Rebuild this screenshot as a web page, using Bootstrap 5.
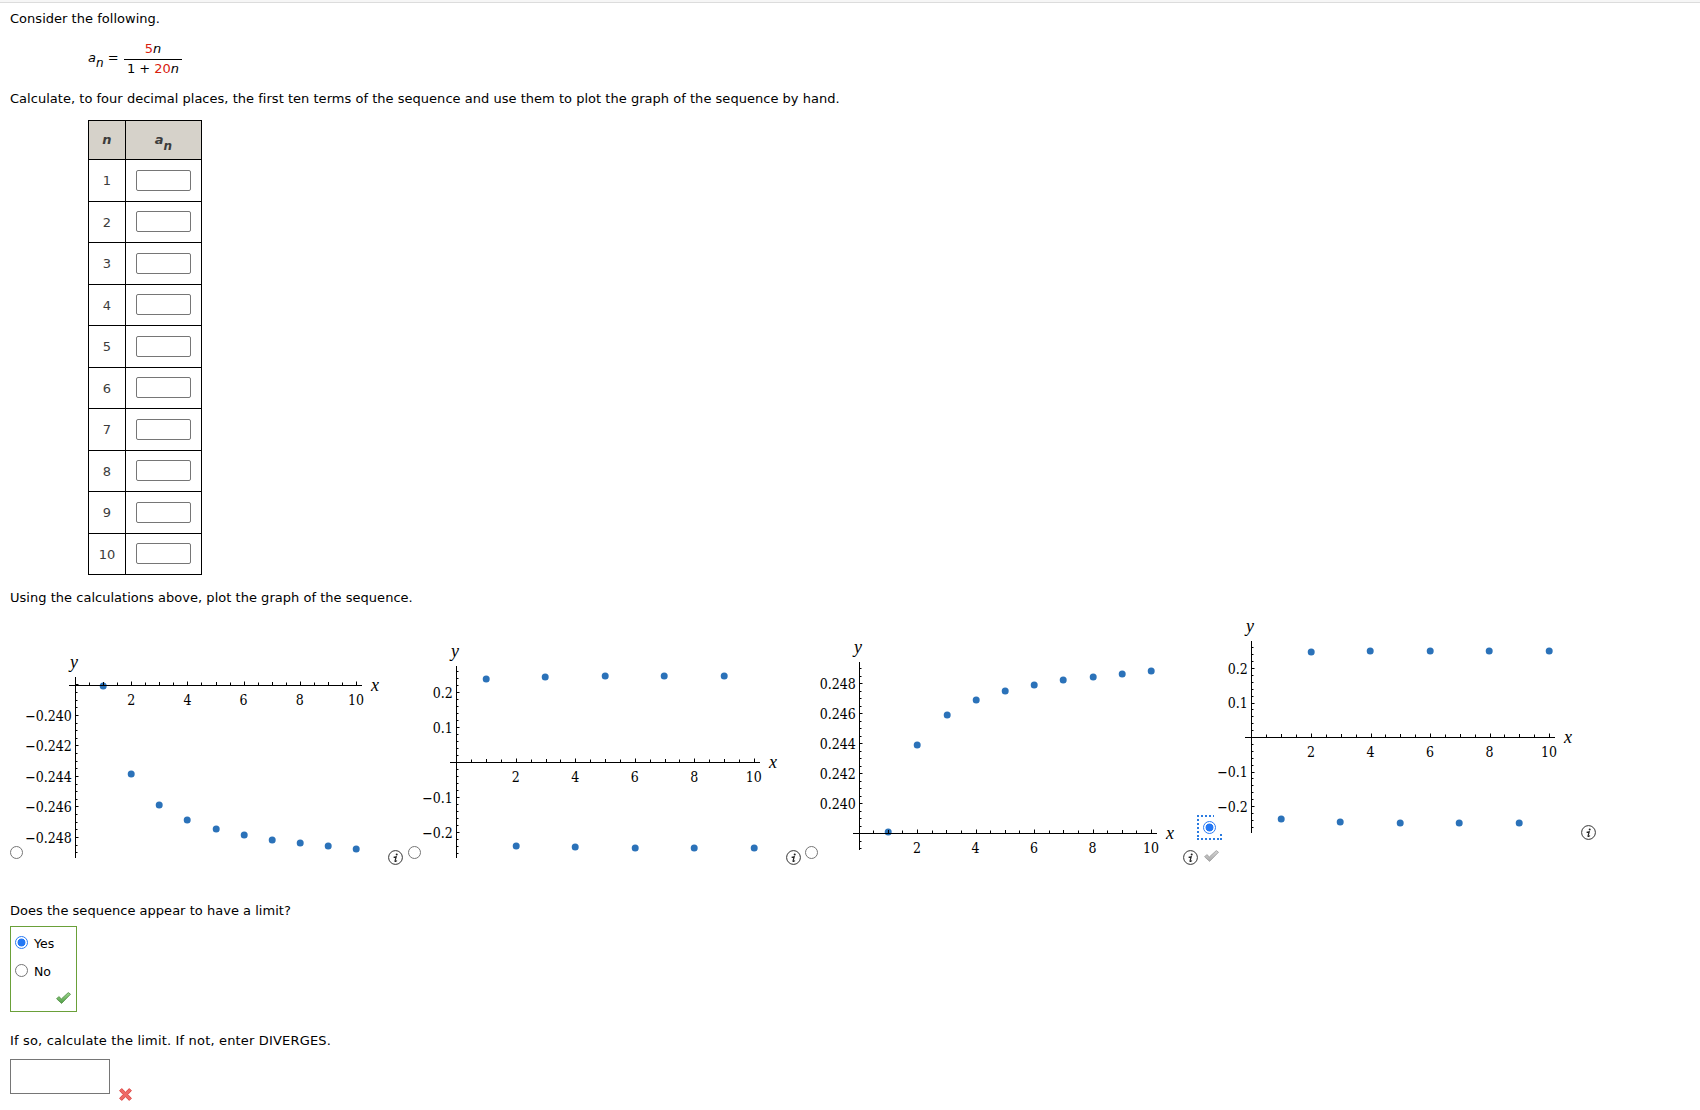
<!DOCTYPE html>
<html lang="en">
<head>
<meta charset="utf-8">
<title>Sequence question</title>
<link rel="stylesheet" href="https://cdn.jsdelivr.net/npm/bootstrap@5.3.0/dist/css/bootstrap.min.css">
<script src="https://cdn.jsdelivr.net/npm/bootstrap@5.3.0/dist/js/bootstrap.bundle.min.js"></script>
<style>
body{font-family:"DejaVu Sans",Verdana,sans-serif;font-size:13px;line-height:18px;color:#000;background:#fff;overflow:hidden}
.topstrip{height:3px;background:#f6f6f6;border-bottom:1px solid #dcdcdc}
.question{padding:7px 0 0 10px}
.question p{margin:0;height:18px;white-space:nowrap;letter-spacing:.025px}
.question p.limitask{letter-spacing:.17px}
.red{color:#d9200f}
.formula{padding:13px 0 0 78px;height:62px}
.seqname{width:36px;padding-top:8px}
.seqname .sub,.terms .sub{position:relative;top:5px;font-size:12px}
.terms .sub{top:6px}
.frac{width:58px;text-align:center;line-height:18px}
.frac .numer{border-bottom:1px solid #000;height:19px;line-height:16px}
.frac .denom{padding-top:0}
.terms{margin:12px 0 0 78px;width:114px;border-collapse:collapse;color:#3c3c3c}
.terms th,.terms td{border:1px solid #000;padding:0;text-align:center;vertical-align:middle}
.terms th{height:39px;background:#d6d2ca}
.terms td{height:41.5px;padding-top:1px}
.terms td:first-child{padding-top:2px}
.terms input{display:block;margin:-1px auto 0;width:55px;height:21px;border:1px solid #767676;border-radius:2px;background:#fff;padding:0}
.plots{margin-top:11px;height:284px}
.plots svg.plot{overflow:visible;font-family:"DejaVu Serif Condensed","DejaVu Serif",serif;font-stretch:condensed;font-size:14px;display:block}
.plots svg.plot .axisname{font-family:"Liberation Serif",serif;font-stretch:normal;font-size:18px;font-style:italic}
.rb{appearance:none;flex:none;margin:0;width:13px;height:13px;border:1px solid #767676;border-radius:50%;background:#fff;display:block}
.rb:checked{border-color:#2b7bf3;background:radial-gradient(circle,#2478f5 3.6px,#fff 4.3px)}
.choice{height:247px}
.choice .rb{margin-bottom:6px}
.choice4{width:400px;margin-left:-1px}
.choice4 .firstline{height:222px}
.choice4 .rb{margin:0}
.pick{width:25px;height:25px;position:relative;display:flex;align-items:center;justify-content:center}
.pick svg{position:absolute;left:0;top:0}
.yesno{width:67px;height:86px;border:1px solid #6aa039;margin-top:6px;padding:8px 0 0 4px}
.yesno label{height:28px;display:flex;gap:6px;line-height:18px}
.yesno label .rb{margin-top:1px}
.yesno label span{font-size:12.5px}
.answer{width:100px;height:35px;border:1px solid #767676;background:#fff;border-radius:0;padding:0}
</style>
</head>
<body>
<svg width="0" height="0" class="d-block">
  <defs>
    <linearGradient id="gg" x1="0" y1="0" x2="0" y2="1"><stop offset="0" stop-color="#9fd78f"/><stop offset="1" stop-color="#4f9e45"/></linearGradient>
    <linearGradient id="gr" x1="0" y1="0" x2="0" y2="1"><stop offset="0" stop-color="#d6d6d6"/><stop offset="1" stop-color="#a9a9a9"/></linearGradient>
    <symbol id="tick" viewBox="0 0 15 12"><path d="M.6 6.8 2.8 4.6 5.4 6.9 12.3.6 14.5 2.2 5.6 11.4Z" stroke-width=".8" stroke-linejoin="round"/></symbol>
    <symbol id="info" viewBox="0 0 15 15"><circle cx="7.5" cy="7.5" r="6.9" fill="#fff" stroke="#333" stroke-width="1"/><circle cx="8.7" cy="4.5" r="1" fill="#222"/><path d="M5.6 7.3 8.2 6.7 7 11.2Q7.2 12 9 10.6" fill="none" stroke="#222" stroke-width="1.2"/></symbol>
  </defs>
</svg>
<div class="topstrip"></div>
<main class="question">
  <p>Consider the following.</p>
  <div class="formula d-flex">
    <div class="seqname"><i>a</i><i class="sub">n</i> =</div>
    <div class="frac"><div class="numer"><span class="red">5</span><i>n</i></div><div class="denom">1 + <span class="red">20</span><i>n</i></div></div>
  </div>
  <p>Calculate, to four decimal places, the first ten terms of the sequence and use them to plot the graph of the sequence by hand.</p>
  <table class="terms">
    <colgroup><col style="width:37px"><col style="width:76px"></colgroup>
    <thead><tr><th><i>n</i></th><th><i>a</i><i class="sub">n</i></th></tr></thead>
    <tbody>
      <tr><td>1</td><td><input type="text"></td></tr>
      <tr><td>2</td><td><input type="text"></td></tr>
      <tr><td>3</td><td><input type="text"></td></tr>
      <tr><td>4</td><td><input type="text"></td></tr>
      <tr><td>5</td><td><input type="text"></td></tr>
      <tr><td>6</td><td><input type="text"></td></tr>
      <tr><td>7</td><td><input type="text"></td></tr>
      <tr><td>8</td><td><input type="text"></td></tr>
      <tr><td>9</td><td><input type="text"></td></tr>
      <tr><td>10</td><td><input type="text"></td></tr>
    </tbody>
  </table>
  <p style="margin-top:14px">Using the calculations above, plot the graph of the sequence.</p>
  <div class="plots d-flex align-items-start">
    <div class="choice d-flex align-items-end"><input class="rb" type="radio" name="g"><svg class="plot" width="365" height="247"></svg><svg width="15" height="15"><use href="#info"/></svg></div>
    <div class="choice d-flex align-items-end ms-1 ps-1"><input class="rb" type="radio" name="g" style="margin-left:-3px"><svg class="plot" width="365" height="247"></svg><svg width="15" height="15"><use href="#info"/></svg></div>
    <div class="choice d-flex align-items-end ms-1"><input class="rb" type="radio" name="g"><svg class="plot" width="365" height="247"></svg><svg width="15" height="15"><use href="#info"/></svg></div>
    <div class="choice4">
      <div class="firstline d-flex align-items-end">
        <div class="pick"><svg width="25" height="25" fill="none" stroke="#2b7be0" stroke-width="2" stroke-dasharray="2 2"><path d="M0 1H17M1 4V25M0 24H25M24 19V25"/></svg><input class="rb" type="radio" name="g" checked></div>
        <svg class="plot" width="359" height="222"></svg><svg width="15" height="15"><use href="#info"/></svg>
      </div>
      <svg class="d-block" width="15" height="12" style="margin:10px 0 0 7px" fill="url(#gr)" stroke="#9a9a9a"><use href="#tick"/></svg>
    </div>
  </div>
  <p>Does the sequence appear to have a limit?</p>
  <div class="yesno">
    <label><input class="rb" type="radio" name="l" checked><span>Yes</span></label>
    <label><input class="rb" type="radio" name="l"><span>No</span></label>
    <svg class="d-block" width="15" height="12" style="margin:1px 0 0 41px" fill="url(#gg)" stroke="#4c8a41"><use href="#tick"/></svg>
  </div>
  <p class="limitask" style="margin-top:20px">If so, calculate the limit. If not, enter DIVERGES.</p>
  <div class="d-flex align-items-start" style="padding-top:9px">
    <input class="answer" type="text">
    <svg width="13" height="13" style="margin:29px 0 0 9px" viewBox="0 0 13 13"><path d="M2.7.6 6.5 4.2 10.3.6 12.4 2.7 8.8 6.5 12.4 10.3 10.3 12.4 6.5 8.8 2.7 12.4.6 10.3 4.2 6.5.6 2.7Z" fill="#ee6a66" stroke="#dc4a48" stroke-linejoin="round"/></svg>
  </div>
</main>
<script>
// Axis geometry of each plot: origin, ends, units per step, labels and points.
const plots = [
 {vx:23,ax:75.5,ay:685.5,y1:677,y2:858,x1:69,x2:362,x0:75.5,u:28.1,t0:715.4,ts:30.5,div:4,labels:['−0.240','−0.242','−0.244','−0.246','−0.248'],
  pts:[[103,686],[131,774],[159,805],[187,820],[216,829],[244,835],[272,840],[300,843],[328,846],[356,849]]},
 {vx:421,ax:456.5,ay:762.5,y1:666,y2:858,x1:450,x2:760,x0:456.8,u:29.75,t0:692.5,ts:34.9,div:5,labels:['0.2','0.1','','−0.1','−0.2'],
  pts:[[486,679],[545,677],[605,676],[664,676],[724,676],[516,846],[575,847],[635,848],[694,848],[754,848]]},
 {vx:818,ax:859.5,ay:833.5,y1:662,y2:850,x1:853,x2:1157,x0:859,u:29.25,t0:683.7,ts:30,div:4,labels:['0.248','0.246','0.244','0.242','0.240'],
  pts:[[888,832],[917,745],[947,715],[976,700],[1005,691],[1034,685],[1063,680],[1093,677],[1122,674],[1151,671]]},
 {vx:1222,ax:1251.5,ay:737.5,y1:641,y2:833,x1:1245,x2:1555,x0:1252,u:29.75,t0:668.5,ts:34.5,div:5,labels:['0.2','0.1','','−0.1','−0.2'],
  pts:[[1311,652],[1370,651],[1430,651],[1489,651],[1549,651],[1281,819],[1340,822],[1400,823],[1459,823],[1519,823]]}
];
document.querySelectorAll('svg.plot').forEach((svg, k) => {
  const p = plots[k], h = svg.getAttribute('height'), snap = v => Math.floor(v) + .5;
  svg.setAttribute('viewBox', `${p.vx} 618 ${svg.getAttribute('width')} ${h}`);
  let s = p.pts.map(q => `<circle cx="${q[0]+.2}" cy="${q[1]}" r="3.5" fill="#2b72b9"/>`).join('');
  let d = `M${p.ax} ${p.y1}V${p.y2}M${p.x1} ${p.ay}H${p.x2}`;
  for (let i = 1; i <= 20; i++) d += `M${snap(p.x0+i*p.u/2)} ${p.ay}v${i%4==0?-4:i%2==0?-3.5:-3}`;
  for (let j = -12; j < 40; j++) {
    const y = p.t0 + j*p.ts/p.div;
    if (y > p.y1+2 && y < p.y2-1) d += `M${p.ax} ${snap(y)}h${j%p.div==0?3:2}`;
  }
  s += `<path d="${d}" fill="none" stroke="#000"/>`;
  p.labels.forEach((t, i) => { if (t) s += `<text x="${p.ax-3.7}" y="${Math.round(p.t0+i*p.ts+5.4)}" text-anchor="end">${t}</text>`; });
  for (let i = 2; i <= 10; i += 2) s += `<text x="${p.x0+i*p.u-.5}" y="${p.ay+19.5}" text-anchor="middle">${i}</text>`;
  s += `<text class="axisname" x="${p.x2+13}" y="${p.ay+5.5}" text-anchor="middle">x</text>`;
  s += `<text class="axisname" x="${p.ax-1.5}" y="${p.y1-9.5}" text-anchor="middle">y</text>`;
  svg.innerHTML = s;
});
</script>
</body>
</html>
